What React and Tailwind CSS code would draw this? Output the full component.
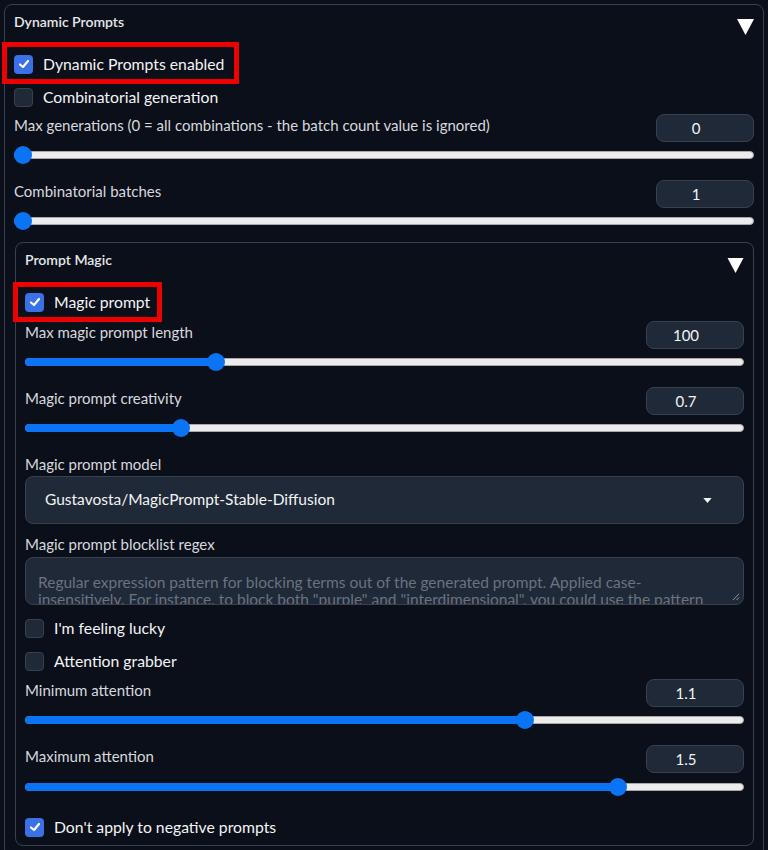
import React from 'react';

const font = { fontFamily: 'Lato, "Liberation Sans", sans-serif' };

const Triangle = ({ className }) => (
    <svg viewBox="0 0 17 16" className={className}>
        <polygon points="0,0 17,0 8.5,16" fill="#ffffff" />
    </svg>
);

const Checkbox = ({ checked }) =>
    checked ? (
        <span className="flex h-[19px] w-[19px] shrink-0 items-center justify-center rounded-[4px] bg-[#3b71e6]">
            <svg viewBox="0 0 12 12" className="h-[12px] w-[12px]">
                <polyline points="2,6.5 5,9 10,3" fill="none" stroke="#fff" strokeWidth="2.2" strokeLinecap="round" strokeLinejoin="round" />
            </svg>
        </span>
    ) : (
        <span className="h-[19px] w-[19px] shrink-0 rounded-[4px] border border-[#374151] bg-[#1f2937]" />
    );

const CheckRow = ({ label, checked, className = '', mark }) => (
    <div className={`relative flex h-[28px] items-center gap-[10px] ${className}`}>
        {/* red annotation frame */}
        {mark && <span className={`pointer-events-none absolute border-[5px] border-[#ee0000] ${mark}`} />}
        <Checkbox checked={checked} />
        <span className="text-[15.75px] leading-[20px] text-[#f3f4f6]">{label}</span>
    </div>
);

const Slider = ({ label, value, p, className = '', gap = 'mt-[3px]' }) => {
    const pos = `calc(9px + ${p} * (100% - 18px))`;
    return (
        <div className={className}>
            <div className="flex h-[28px] items-start justify-between">
                <span className="pt-[1px] text-[15px] leading-[20px] text-[#d6d9de]">{label}</span>
                <div className="flex h-[28px] w-[98px] items-center justify-center rounded-[8px] border border-[#374151] bg-[#1f2937] pr-[18px] text-[15px] text-[#f3f4f6]">
                    {value}
                </div>
            </div>
            <div className={`relative flex h-[20px] items-center ${gap}`}>
                <div className="h-[8px] w-full rounded-full border border-[#a8a8a8] bg-[#ececec]" />
                <div className="absolute left-0 h-[8px] rounded-full bg-[#0a74f5]" style={{ width: pos }} />
                <div className="absolute h-[18px] w-[18px] -translate-x-1/2 rounded-full bg-[#0a74f5]" style={{ left: pos }} />
            </div>
        </div>
    );
};

export default function App() {
    return (
        <div className="min-h-[850px] bg-[#0b0f19] pt-[4px] pl-[4px]" style={font}>
            <div className="w-[760px] rounded-[8px] border border-[#374151] px-[9px] pt-[7px] pb-[10px]">
                <div className="flex h-[24px] items-start justify-between">
                    <span className="text-[14px] font-semibold leading-[20px] text-[#e5e7eb]">Dynamic Prompts</span>
                    <Triangle className="mt-[7px] h-[16px] w-[17px]" />
                </div>

                <CheckRow label="Dynamic Prompts enabled" checked className="mt-[14px]" mark="-left-[12px] -top-[8px] h-[42px] w-[237px]" />
                <CheckRow label="Combinatorial generation" className="mt-[5px]" />

                <Slider label="Max generations (0 = all combinations - the batch count value is ignored)" value="0" p={0} className="mt-[3px]" />
                <Slider label="Combinatorial batches" value="1" p={0} className="mt-[15px]" />

                <div className="mt-[11px] ml-[1px] rounded-[8px] border border-[#374151] px-[9px] pt-[7px] pb-[4px]">
                    <div className="flex h-[24px] items-start justify-between">
                        <span className="text-[14px] font-semibold leading-[20px] text-[#e5e7eb]">Prompt Magic</span>
                        <Triangle className="mt-[8px] h-[15px] w-[17px]" />
                    </div>

                    <CheckRow label="Magic prompt" checked className="mt-[14px]" mark="-left-[12px] -top-[6px] h-[40px] w-[149px]" />

                    <Slider label="Max magic prompt length" value="100" p={0.26} className="mt-[5px]" />
                    <Slider label="Magic prompt creativity" value="0.7" p={0.209} className="mt-[15px]" />

                    <div className="mt-[16px] text-[15px] leading-[20px] text-[#d6d9de]">Magic prompt model</div>
                    <div className="mt-[2px] flex h-[48px] items-center justify-between rounded-[8px] border border-[#374151] bg-[#1f2937] pl-[19px] pr-[31px]">
                        <span className="text-[15.5px] text-[#f3f4f6]">Gustavosta/MagicPrompt-Stable-Diffusion</span>
                        <svg viewBox="0 0 10 6" className="h-[5px] w-[9px]">
                            <polygon points="0,0 10,0 5,6" fill="#f3f4f6" />
                        </svg>
                    </div>

                    <div className="mt-[10px] text-[15px] leading-[20px] text-[#d6d9de]">Magic prompt blocklist regex</div>
                    <div className="relative mt-[3px] h-[48px] overflow-hidden rounded-[8px] border border-[#374151] bg-[#1f2937] pl-[12px] pr-[14px] pt-[16px]">
                        <p className="whitespace-nowrap text-[15.5px] leading-[17px] text-[#6b7280]">
                            Regular expression pattern for blocking terms out of the generated prompt. Applied case-
                            <br />
                            insensitively. For instance, to block both "purple" and "interdimensional", you could use the pattern
                        </p>
                        <svg viewBox="0 0 10 10" className="absolute right-[3px] bottom-[3px] h-[9px] w-[9px]">
                            <line x1="9" y1="2" x2="2" y2="9" stroke="#9ca3af" strokeWidth="1" />
                            <line x1="9" y1="6" x2="6" y2="9" stroke="#9ca3af" strokeWidth="1" />
                        </svg>
                    </div>

                    <CheckRow label="I'm feeling lucky" className="mt-[9px]" />
                    <CheckRow label="Attention grabber" className="mt-[5px]" />

                    <Slider label="Minimum attention" value="1.1" p={0.7} className="mt-[4px]" />
                    <Slider label="Maximum attention" value="1.5" p={0.833} className="mt-[15px]" gap="mt-[4px]" />

                    <CheckRow label="Don't apply to negative prompts" checked className="mt-[16px]" />
                </div>
            </div>
        </div>
    );
}
